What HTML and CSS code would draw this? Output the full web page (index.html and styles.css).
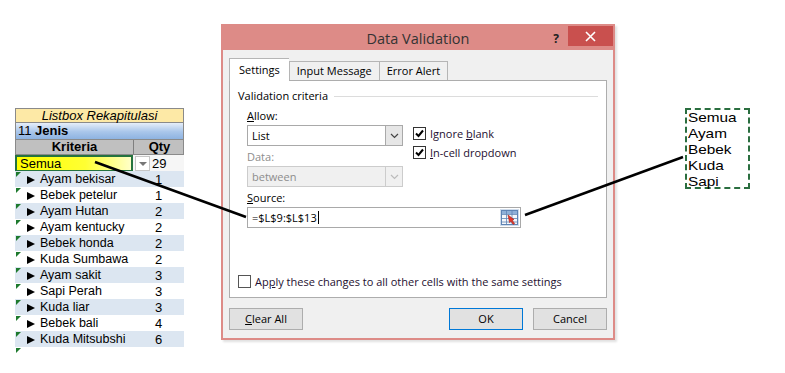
FILE: index.html
```html
<!DOCTYPE html>
<html lang="en">
<head>
  <meta charset="UTF-8" />
  <title>Data Validation</title>
  <link rel="stylesheet" href="styles.css">
</head>
<body>
  <div class="stage">
    <div class="sheet">
      <div class="row title"><span>Listbox Rekapitulasi</span></div>
      <div class="row count"><span>11 <b>Jenis</b></span></div>
      <div class="row head"><span>Kriteria</span><span>Qty</span></div>
      <div class="row pickrow">
        <span class="semua">Semua</span>
        <span class="qty-cell"><i class="dd"></i>29</span>
      </div>
      <div class="row item band"><span><i class="mark"></i>Ayam bekisar</span><span class="num">1</span></div>
      <div class="row item"><span><i class="mark"></i>Bebek petelur</span><span class="num">1</span></div>
      <div class="row item band"><span><i class="mark"></i>Ayam Hutan</span><span class="num">2</span></div>
      <div class="row item"><span><i class="mark"></i>Ayam kentucky</span><span class="num">2</span></div>
      <div class="row item band"><span><i class="mark"></i>Bebek honda</span><span class="num">2</span></div>
      <div class="row item"><span><i class="mark"></i>Kuda Sumbawa</span><span class="num">2</span></div>
      <div class="row item band"><span><i class="mark"></i>Ayam sakit</span><span class="num">3</span></div>
      <div class="row item"><span><i class="mark"></i>Sapi Perah</span><span class="num">3</span></div>
      <div class="row item band"><span><i class="mark"></i>Kuda liar</span><span class="num">3</span></div>
      <div class="row item"><span><i class="mark"></i>Bebek bali</span><span class="num">4</span></div>
      <div class="row item band"><span><i class="mark"></i>Kuda Mitsubshi</span><span class="num">6</span></div>
      <div class="row item empty"><span></span><span></span></div>
    </div>

    <div class="dialog">
      <div class="titlebar">
        <span class="caption">Data Validation</span>
        <span class="help">?</span>
        <span class="close">
          <svg width="11" height="11" viewBox="0 0 11 11"><path d="M1 1 L10 10 M10 1 L1 10" stroke="#fff" stroke-width="1.6"/></svg>
        </span>
      </div>
      <div class="dlg-body">
        <div class="tabs">
          <span class="tab active">Settings</span>
          <span class="tab">Input Message</span>
          <span class="tab">Error Alert</span>
        </div>
        <div class="panel">
          <div class="legend">Validation criteria</div>
          <div class="field">
            <div class="lbl"><u>A</u>llow:</div>
            <div class="allow-row">
              <div class="select">
                <span>List</span>
                <span class="arrow"><svg width="9" height="6" viewBox="0 0 9 6"><path d="M1 1 L4.5 4.5 L8 1" fill="none" stroke="#444" stroke-width="1.2"/></svg></span>
              </div>
              <div class="checks">
                <label class="check"><span class="box on"><svg width="11" height="11" viewBox="0 0 11 11"><path d="M2 5.5 L4.5 8 L9 2.5" fill="none" stroke="#000" stroke-width="2"/></svg></span><span>Ignore <u>b</u>lank</span></label>
                <label class="check"><span class="box on"><svg width="11" height="11" viewBox="0 0 11 11"><path d="M2 5.5 L4.5 8 L9 2.5" fill="none" stroke="#000" stroke-width="2"/></svg></span><span><u>I</u>n-cell dropdown</span></label>
              </div>
            </div>
            <div class="lbl muted">Data:</div>
            <div class="select disabled">
              <span>between</span>
              <span class="arrow"><svg width="9" height="6" viewBox="0 0 9 6"><path d="M1 1 L4.5 4.5 L8 1" fill="none" stroke="#bbb" stroke-width="1.2"/></svg></span>
            </div>
            <div class="lbl"><u>S</u>ource:</div>
            <div class="source">
              <span>=$L$9:$L$13<i class="caret"></i></span>
              <span class="refbtn">
                <svg width="19" height="17" viewBox="0 0 19 17">
                  <rect x="0" y="0" width="19" height="17" fill="#cfdcec"/>
                  <rect x="1.5" y="1.5" width="16" height="14" fill="#f4f7fb" stroke="#5f84b4"/>
                  <rect x="2" y="2" width="15" height="3" fill="#8fb0d8"/>
                  <path d="M1.5 5.5 H17.5 M1.5 9.5 H17.5 M1.5 13 H17.5 M6.5 1.5 V15.5 M12 1.5 V15.5" stroke="#5f84b4" stroke-width="0.8"/>
                  <path d="M8 6 L14 10.5 L12.3 11.4 L14.6 14.6 L13.2 15.4 L11 12.2 L9.6 13.6 Z" fill="#e2372b" stroke="#a8231a" stroke-width="0.6"/>
                </svg>
              </span>
            </div>
          </div>
          <label class="check apply"><span class="box"></span><span>Ap<u>p</u>ly these changes to all other cells with the same settings</span></label>
        </div>
        <div class="buttons">
          <span class="btn"><u>C</u>lear All</span>
          <span class="spacer"></span>
          <span class="btn default">OK</span>
          <span class="btn">Cancel</span>
        </div>
      </div>
    </div>

    <div class="pick">
      <span>Semua</span>
      <span>Ayam</span>
      <span>Bebek</span>
      <span>Kuda</span>
      <span>Sapi</span>
    </div>

    <svg class="links" width="785" height="373" viewBox="0 0 785 373">
      <line x1="95" y1="162" x2="246" y2="217" stroke="#000" stroke-width="2.5"/>
      <line x1="525" y1="215" x2="683" y2="157" stroke="#000" stroke-width="2.5"/>
    </svg>
  </div>
</body>
</html>
```

FILE: styles.css
```css
* {
  box-sizing: border-box;
}
body {
  margin: 0;
  background-color: #ffffff;
  font-family: "Liberation Sans", Arial, sans-serif;
}
.stage {
  position: relative;
  width: 785px;
  height: 373px;
  display: flex;
  align-items: flex-start;
  padding-left: 15px;
  overflow: hidden;
}

/* spreadsheet */
.sheet {
  margin-top: 108px;
  width: 169px;
  font-size: 13px;
  color: #000;
}
.row {
  display: grid;
  grid-template-columns: 118px 51px;
  height: 16px;
  line-height: 16px;
  position: relative;
}
.row.title {
  display: block;
  height: 15px;
  line-height: 14px;
  background-color: #fde9a6;
  border: 1px solid #8a8a8a;
  text-align: center;
  font-style: italic;
}
.row.count {
  display: block;
  background: linear-gradient(#e6eef9, #a9c6ea 55%, #8eb3e1);
  border-left: 1px solid #8a8a8a;
  border-right: 1px solid #8a8a8a;
  padding-left: 2px;
}
.row.head {
  background-color: #c0c0c0;
  font-weight: bold;
  border: 1px solid #8a8a8a;
  height: 16px;
  line-height: 14px;
}
.row.head span {
  text-align: center;
}
.row.head span:first-child {
  border-right: 1px solid #7f7f7f;
}
.pickrow .semua {
  background: linear-gradient(90deg, #ffff00, #ffff33 60%, #ffffc8);
  border: 2px solid #25733f;
  line-height: 13px;
  padding-left: 3px;
  height: 17px;
}
.qty-cell {
  background-color: #f6f6f6;
  display: flex;
  align-items: center;
}
.dd {
  width: 15px;
  height: 15px;
  margin: 0 2px 0 2px;
  border: 1px solid #c6c6c6;
  background-color: #fff;
  position: relative;
}
.dd::after {
  content: "";
  position: absolute;
  left: 3px;
  top: 5px;
  border-left: 4px solid transparent;
  border-right: 4px solid transparent;
  border-top: 4px solid #777;
}
.item {
  font-size: 12.5px;
  line-height: 17px;
}
.item.band {
  background-color: #dce6f1;
}
.item span:first-child {
  padding-left: 12px;
  display: flex;
  align-items: center;
}
.item::before {
  content: "";
  position: absolute;
  left: 1px;
  top: 1px;
  border-top: 5px solid #1e7a2e;
  border-right: 5px solid transparent;
}
.item.empty {
  background: none;
}
.mark {
  width: 0;
  height: 0;
  border-top: 4px solid transparent;
  border-bottom: 4px solid transparent;
  border-left: 8px solid #000;
  margin-right: 5px;
}
.num {
  text-align: center;
  font-size: 13px;
}

/* dialog */
.dialog {
  margin-left: 37px;
  margin-top: 24px;
  width: 394px;
  background-color: #f0f0f0;
  border: 2px solid #dd8b87;
  border-top: none;
  box-shadow: 2px 2px 2px rgba(0, 0, 0, 0.12);
  font-family: "Open Sans", "Noto Sans", sans-serif;
  font-size: 11px;
  color: #000;
}
.titlebar {
  height: 26px;
  background-color: #dd8b87;
  margin: 0 -2px;
  position: relative;
  display: flex;
  align-items: center;
  justify-content: center;
}
.caption {
  font-size: 14.5px;
  color: #333;
  margin-top: 3px;
}
.help {
  position: absolute;
  right: 56px;
  top: 6px;
  font-weight: bold;
  font-size: 12px;
  color: #222;
}
.close {
  position: absolute;
  right: 2px;
  top: 2px;
  width: 45px;
  height: 20px;
  background-color: #c9504e;
  display: flex;
  align-items: center;
  justify-content: center;
}
.dlg-body {
  padding: 8px 6px 8px 6px;
}
.tabs {
  display: flex;
  align-items: flex-end;
  height: 22px;
  position: relative;
  z-index: 1;
}
.tab {
  height: 19px;
  line-height: 17px;
  border: 1px solid #b5b5b5;
  border-bottom: none;
  background-color: #f0f0f0;
  padding: 0 7px;
}
.tab.active {
  height: 23px;
  line-height: 21px;
  background-color: #fff;
  padding: 0 9px;
  margin-bottom: -1px;
  border-right: none;
}
.tab + .tab {
  border-left: none;
}
.tab.active + .tab {
  border-left: 1px solid #b5b5b5;
}
.panel {
  height: 218px;
  background-color: #fff;
  border: 1px solid #adadad;
  padding: 8px 8px 0 8px;
  display: flex;
  flex-direction: column;
}
.legend {
  height: 14px;
  line-height: 14px;
  display: flex;
  align-items: center;
  gap: 6px;
}
.legend::after {
  content: "";
  flex: 1;
  height: 1px;
  background-color: #dcdcdc;
}
.field {
  padding-left: 9px;
}
.lbl {
  height: 12px;
  line-height: 12px;
  margin-top: 7px;
  margin-bottom: 3px;
}
.lbl.muted {
  color: #8d8d8d;
  margin-top: 5px;
}
.field .select.disabled + .lbl {
  margin-top: 5px;
}
.allow-row {
  display: flex;
  align-items: flex-start;
  height: 21px;
}
.select {
  width: 156px;
  height: 21px;
  border: 1px solid #a9a9a9;
  background-color: #fff;
  display: flex;
  align-items: center;
  justify-content: space-between;
  padding-left: 4px;
}
.select .arrow {
  width: 17px;
  height: 19px;
  border-left: 1px solid #a9a9a9;
  background-color: #e6e6e6;
  display: flex;
  align-items: center;
  justify-content: center;
}
.select.disabled {
  background-color: #f0f0f0;
  border-color: #cccccc;
  color: #8d8d8d;
}
.select.disabled .arrow {
  border-left-color: #cccccc;
  background-color: #f0f0f0;
}
.checks {
  margin-left: 10px;
  display: flex;
  flex-direction: column;
  gap: 6px;
  margin-top: 2px;
}
.check {
  display: flex;
  align-items: center;
  height: 13px;
  color: #1e1030;
}
.box {
  width: 13px;
  height: 13px;
  border: 1px solid #333;
  background-color: #fff;
  margin-right: 4px;
  display: flex;
  align-items: center;
  justify-content: center;
}
.source {
  width: 274px;
  height: 21px;
  border: 1px solid #a9a9a9;
  background-color: #fff;
  display: flex;
  align-items: center;
  justify-content: space-between;
  padding-left: 4px;
}
.caret {
  display: inline-block;
  width: 1px;
  height: 13px;
  background-color: #000;
  vertical-align: -2px;
  margin-left: 1px;
}
.refbtn {
  margin-right: 1px;
  display: flex;
}
.apply {
  margin-top: auto;
  margin-bottom: 9px;
}
.apply .box {
  border-color: #555;
}
.buttons {
  display: flex;
  margin-top: 10px;
  gap: 10px;
}
.spacer {
  flex: 1;
}
.btn {
  width: 74px;
  height: 22px;
  line-height: 20px;
  text-align: center;
  background-color: #e1e1e1;
  border: 1px solid #adadad;
}
.btn.default {
  border-color: #0078d7;
}

/* list source */
.pick {
  margin-left: 70px;
  margin-top: 108px;
  width: 65px;
  height: 81px;
  border: 2px dashed #2a6e3f;
  display: flex;
  flex-direction: column;
  padding: 0 0 0 1px;
}
.pick span {
  height: 16px;
  line-height: 16px;
  font-size: 13px;
  transform: scaleX(1.18);
  transform-origin: left center;
}

.links {
  position: absolute;
  left: 0;
  top: 0;
  pointer-events: none;
}
```
